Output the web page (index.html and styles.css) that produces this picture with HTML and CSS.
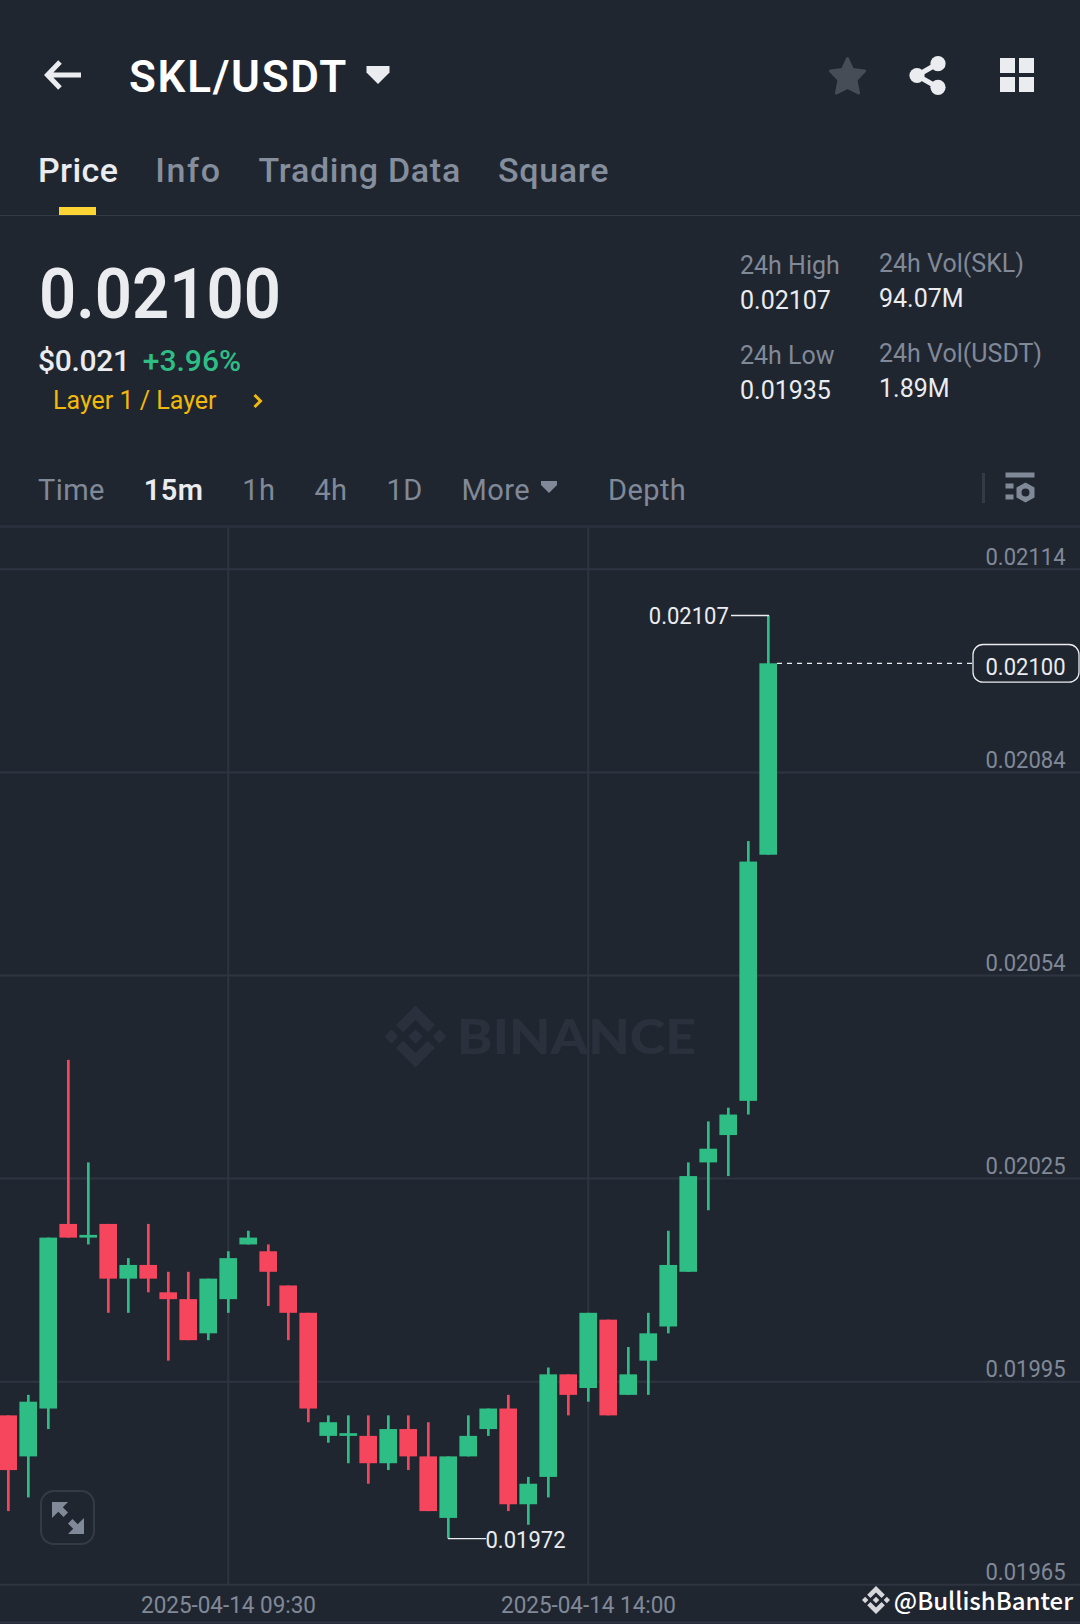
FILE: index.html
```html
<!DOCTYPE html>
<html lang="en">
<head>
    <meta charset="UTF-8">
    <meta name="viewport" content="width=device-width, initial-scale=1.0">
    <title>SKL/USDT</title>
    <link rel="stylesheet" href="styles.css">
</head>
<body>
    <svg width="0" height="0" class="defs">
        <symbol id="logo" viewBox="0 0 62 62">
            <path d="M31 0L50.500 19.500L43.300 26.700L31 14.400L18.700 26.700L11.500 19.500Z"/>
            <path d="M31 62L50.500 42.500L43.300 35.300L31 47.600L18.700 35.300L11.500 42.500Z"/>
            <path d="M7 24L14 31L7 38L0 31Z"/>
            <path d="M55 24L62 31L55 38L48 31Z"/>
            <path d="M31 23.700L38.300 31L31 38.300L23.700 31Z"/>
        </symbol>
    </svg>

    <header class="top-bar">
        <svg class="back" width="38" height="30" viewBox="0 0 38 30"><path d="M16 2L3.500 15L16 28M3.500 15H37" fill="none" stroke="#eaecef" stroke-width="5"/></svg>
        <h1>SKL/USDT</h1>
        <svg class="caret" width="24" height="18" viewBox="0 0 24 18"><path d="M0.500 0H23.500V6.500L12 18L0.500 6.500Z" fill="#eaecef"/></svg>
        <div class="actions">
            <svg width="38" height="39" viewBox="0 0 38 39"><path d="M19.500 2.500L24.500 13.500L36.500 15L28 24L30.500 37L19.500 31.500L8.500 37L11 24L2.500 15L14.500 13.500Z" fill="#474d57" stroke="#474d57" stroke-width="3" stroke-linejoin="round"/></svg>
            <svg width="37" height="39" viewBox="0 0 37 39"><path d="M29 7.500L8 19.500L29 31.500" fill="none" stroke="#eaecef" stroke-width="5"/><circle cx="29" cy="7.700" r="7.600" fill="#eaecef"/><circle cx="8" cy="19.500" r="7.600" fill="#eaecef"/><circle cx="29" cy="31.300" r="7.600" fill="#eaecef"/></svg>
            <svg width="34" height="34" viewBox="0 0 34 34"><path d="M0 0H15V15H0ZM19 0H34V15H19ZM0 19H15V34H0ZM19 19H34V34H19Z" fill="#eaecef"/></svg>
        </div>
    </header>

    <nav class="tabs">
        <a class="active">Price</a>
        <a class="info">Info</a>
        <a>Trading Data</a>
        <a>Square</a>
    </nav>

    <section class="ticker">
        <div class="ticker-main">
            <div class="last-price">0.02100</div>
            <div class="change"><span>$0.021</span><span class="up">+3.96%</span></div>
            <div class="category">Layer 1 / Layer
                <svg width="10" height="15" viewBox="0 0 10 15"><path d="M1.500 1L7.500 7L1.500 13" fill="none" stroke="#f0b90b" stroke-width="3"/></svg>
            </div>
        </div>
        <div class="stats">
            <dl><dt>24h High</dt><dd>0.02107</dd><dt>24h Low</dt><dd>0.01935</dd></dl>
            <dl class="volume"><dt>24h Vol(SKL)</dt><dd>94.07M</dd><dt>24h Vol(USDT)</dt><dd>1.89M</dd></dl>
        </div>
    </section>

    <nav class="intervals">
        <a>Time</a>
        <a class="active">15m</a>
        <a>1h</a>
        <a>4h</a>
        <a>1D</a>
        <a>More</a>
        <svg class="more-caret" width="16" height="12" viewBox="0 0 16 12"><path d="M0 0H16V4L8 12L0 4Z" fill="#808998"/></svg>
        <a>Depth</a>
        <span class="divider"></span>
        <svg width="30" height="31" viewBox="0 0 30 31" fill="#808998">
            <path d="M0.500 0.500H29.500V5.500H0.500ZM0.500 11.500H8.500V16.500H0.500ZM0.500 22.500H8.500V27.500H0.500Z"/>
            <path fill-rule="evenodd" d="M20.500 10.500L29.500 15.500V25.500L20.500 30.500L11.500 25.500V15.500ZM20.500 16.500A4 4 0 1 0 20.500 24.500A4 4 0 1 0 20.500 16.500Z"/>
        </svg>
    </nav>

    <main class="chart-area">
        <svg id="chart" width="1080" height="1096" viewBox="0 528 1080 1096"></svg>
        <button class="expand">
            <svg width="32" height="32" viewBox="0 0 32 32" fill="#808998">
                <path d="M0 0H16L10.800 5.200L16 10.400L11.500 15L6.300 9.800L0 16Z"/>
                <path d="M32 32H16L21.200 26.800L16 21.600L20.500 17L25.700 22.200L32 16Z"/>
            </svg>
        </button>
        <div class="author"><svg width="28" height="28"><use href="#logo"/></svg>@BullishBanter</div>
    </main>

    <script>
        // open, high, low, close in 0.00001 USDT
        const candles = [
            [1990, 1990, 1976, 1982], [1984, 1993, 1978, 1992], [1991, 2016, 1988, 2016],
            [2018, 2042, 2016, 2016], [2016, 2027, 2015, 2016], [2018, 2018, 2005, 2010],
            [2010, 2013, 2005, 2012], [2012, 2018, 2008, 2010], [2008, 2011, 1998, 2007],
            [2007, 2011, 2001, 2001], [2002, 2010, 2001, 2010], [2007, 2014, 2005, 2013],
            [2015, 2017, 2015, 2016], [2014, 2015, 2006, 2011], [2009, 2009, 2001, 2005],
            [2005, 2005, 1989, 1991], [1987, 1990, 1986, 1989], [1987, 1990, 1983, 1987],
            [1987, 1990, 1980, 1983], [1983, 1990, 1982, 1988], [1988, 1990, 1982, 1984],
            [1984, 1989, 1976, 1976], [1975, 1984, 1972, 1984], [1984, 1990, 1984, 1987],
            [1988, 1991, 1987, 1991], [1991, 1993, 1976, 1977], [1977, 1981, 1974, 1980],
            [1981, 1997, 1978, 1996], [1996, 1996, 1990, 1993], [1994, 2005, 1992, 2005],
            [2004, 2004, 1990, 1990], [1993, 2000, 1993, 1996], [1998, 2005, 1993, 2002],
            [2003, 2017, 2002, 2012], [2011, 2027, 2011, 2025], [2027, 2033, 2020, 2029],
            [2031, 2035, 2025, 2034], [2036, 2074, 2034, 2071], [2072, 2107, 2072, 2100]
        ];
        const gridPrices = ['0.02114', '0.02084', '0.02054', '0.02025', '0.01995', '0.01965'];
        const priceY = p => 663.3 + (2100 - p) * 6.837;

        let out = '';
        gridPrices.forEach((label, i) => {
            const y = 569.3 + i * 203.1;
            out += `<line class="grid" x1="0" x2="1080" y1="${y}" y2="${y}"/>`;
        });
        out += `
            <line class="grid" x1="228.300" x2="228.300" y1="528" y2="1584"/>
            <line class="grid" x1="588.300" x2="588.300" y1="528" y2="1584"/>
            <line class="grid" x1="0" x2="1080" y1="1622.500" y2="1622.500"/>
            <g class="watermark">
                <use href="#logo" x="384.500" y="1005.500" width="62" height="62"/>
                <text x="457" y="1053.500" textLength="239">BINANCE</text>
            </g>`;
        candles.forEach(([open, high, low, close], i) => {
            const x = 8.4 + i * 20;
            const top = priceY(Math.max(open, close));
            const bottom = priceY(Math.min(open, close));
            const height = Math.max(bottom - top, 2.7);
            out += `<g class="${close >= open ? 'rise' : 'fall'}">
                <rect x="${x - 1.4}" y="${priceY(high)}" width="2.700" height="${priceY(low) - priceY(high)}"/>
                <rect x="${x - 9}" y="${bottom - height}" width="17.600" height="${height}"/>
            </g>`;
        });
        gridPrices.forEach((label, i) => {
            out += `<text class="axis" x="985.500" y="${564.6 + i * 203.15}" textLength="80">${label}</text>`;
        });
        out += `
            <text class="axis" x="141" y="1613.300" textLength="175">2025-04-14 09:30</text>
            <text class="axis" x="501" y="1613.300" textLength="175">2025-04-14 14:00</text>
            <line class="marker" x1="731" x2="769" y1="615.500" y2="615.500"/>
            <text class="price" x="648.800" y="624.300" textLength="80">0.02107</text>
            <line class="marker" x1="448" x2="486" y1="1538.700" y2="1538.700"/>
            <text class="price" x="485.500" y="1548.200" textLength="80">0.01972</text>
            <line class="marker dashed" x1="777" x2="973" y1="663.400" y2="663.400"/>
            <rect class="tag" x="973" y="644.500" width="106" height="37.700" rx="10"/>
            <text class="price" x="985.500" y="675" textLength="80">0.02100</text>`;
        const chart = document.getElementById('chart');
        chart.innerHTML = out;
        chart.querySelectorAll('text').forEach(t => t.setAttribute('lengthAdjust', 'spacingAndGlyphs'));
    </script>
</body>
</html>
```
FILE: styles.css
```css
body {
    margin: 0;
    width: 1080px;
    height: 1624px;
    overflow: hidden;
    background-color: #202630;
    color: #eaecef;
    font-family: Roboto, "Noto Sans", sans-serif;
}
svg {
    display: block;
    flex: none;
}
.defs {
    position: absolute;
}

.top-bar {
    display: flex;
    align-items: center;
    height: 150px;
    padding: 0 46px 0 44px;
}
h1 {
    margin: 4px 18px 0 47px;
    font-size: 44px;
    font-weight: 600;
    line-height: 50px;
    letter-spacing: 1.7px;
    color: #ffffff;
}
.actions {
    display: flex;
    align-items: center;
    margin-left: auto;
}
.actions svg + svg {
    margin-left: 43px;
}
.actions svg + svg + svg {
    margin-left: 54px;
}

.tabs {
    display: flex;
    gap: 37px;
    height: 65px;
    padding-left: 38px;
    border-bottom: 1px solid #333b47;
    font-size: 34px;
    font-weight: 500;
    line-height: 40px;
    letter-spacing: 0.7px;
    color: #848e9c;
}
.tabs a {
    height: 65px;
}
.tabs .info {
    letter-spacing: 1.6px;
}
.tabs .active {
    letter-spacing: 0.4px;
    color: #eaecef;
}
.tabs .active::after {
    content: "";
    display: block;
    width: 37px;
    height: 8px;
    margin: 17px 0 0 21px;
    background-color: #fcd535;
}

.ticker {
    display: flex;
    justify-content: space-between;
    height: 234px;
    padding: 0 39px;
}
.last-price {
    margin-top: 36px;
    font-size: 71px;
    font-weight: 600;
    line-height: 84px;
    transform: scaleX(0.918);
    transform-origin: left;
}
.change {
    display: flex;
    gap: 13px;
    margin: 5px 0 0 -1px;
    font-size: 30px;
    font-weight: 500;
    line-height: 40px;
    letter-spacing: -0.3px;
}
.up {
    letter-spacing: 0;
    color: #2ebd85;
}
.category {
    display: flex;
    align-items: center;
    gap: 36px;
    margin: 1px 0 0 14px;
    font-size: 25px;
    line-height: 38px;
    color: #f0b90b;
}
.stats {
    display: flex;
    width: 301px;
    font-size: 25px;
}
dl {
    width: 139px;
    margin: 32px 0 0;
    white-space: nowrap;
}
.volume {
    margin-top: 30px;
}
dt {
    height: 36px;
    line-height: 36px;
    color: #808998;
}
dd {
    height: 54px;
    margin: 0;
    line-height: 34px;
}

.intervals {
    display: flex;
    align-items: center;
    gap: 39px;
    height: 75px;
    padding: 0 45px 0 38px;
    border-bottom: 3px solid #29303b;
    font-size: 29px;
    letter-spacing: 0.4px;
    color: #808998;
}
.intervals a {
    padding-top: 4px;
}
.intervals .active {
    font-weight: 600;
    color: #eaecef;
}
.intervals .more-caret {
    margin: 0 12px 2px -28px;
}
.divider {
    width: 3px;
    height: 30px;
    margin-left: auto;
    margin-right: -19px;
    background-color: #333b47;
}

.chart-area {
    position: relative;
    height: 1096px;
}
.grid {
    stroke: #2e3540;
    stroke-width: 2;
}
.watermark {
    fill: #2b313c;
    font-family: Lato, sans-serif;
    font-size: 47px;
    font-weight: 900;
}
.rise {
    fill: #2ebd85;
}
.fall {
    fill: #f6465d;
}
.axis {
    font-size: 23px;
    fill: #808998;
}
.price {
    font-size: 23px;
    fill: #eaecef;
}
.marker {
    stroke: #eaecef;
    stroke-width: 1.3;
}
.dashed {
    stroke-dasharray: 5 5;
}
.tag {
    fill: #202630;
    stroke: #eaecef;
    stroke-width: 1.3;
}
.expand {
    position: absolute;
    left: 40px;
    top: 962px;
    display: flex;
    align-items: center;
    justify-content: center;
    width: 55px;
    height: 55px;
    padding: 0;
    border: 2px solid #333b47;
    border-radius: 14px;
    background: #202630;
}
.author {
    position: absolute;
    right: 7px;
    bottom: 10px;
    display: flex;
    align-items: center;
    gap: 4px;
    font-family: "Noto Sans CJK SC", sans-serif;
    font-size: 24px;
    font-weight: 500;
    line-height: 28px;
    color: #ffffff;
}
.author svg {
    fill: #d5d7da;
}
```
